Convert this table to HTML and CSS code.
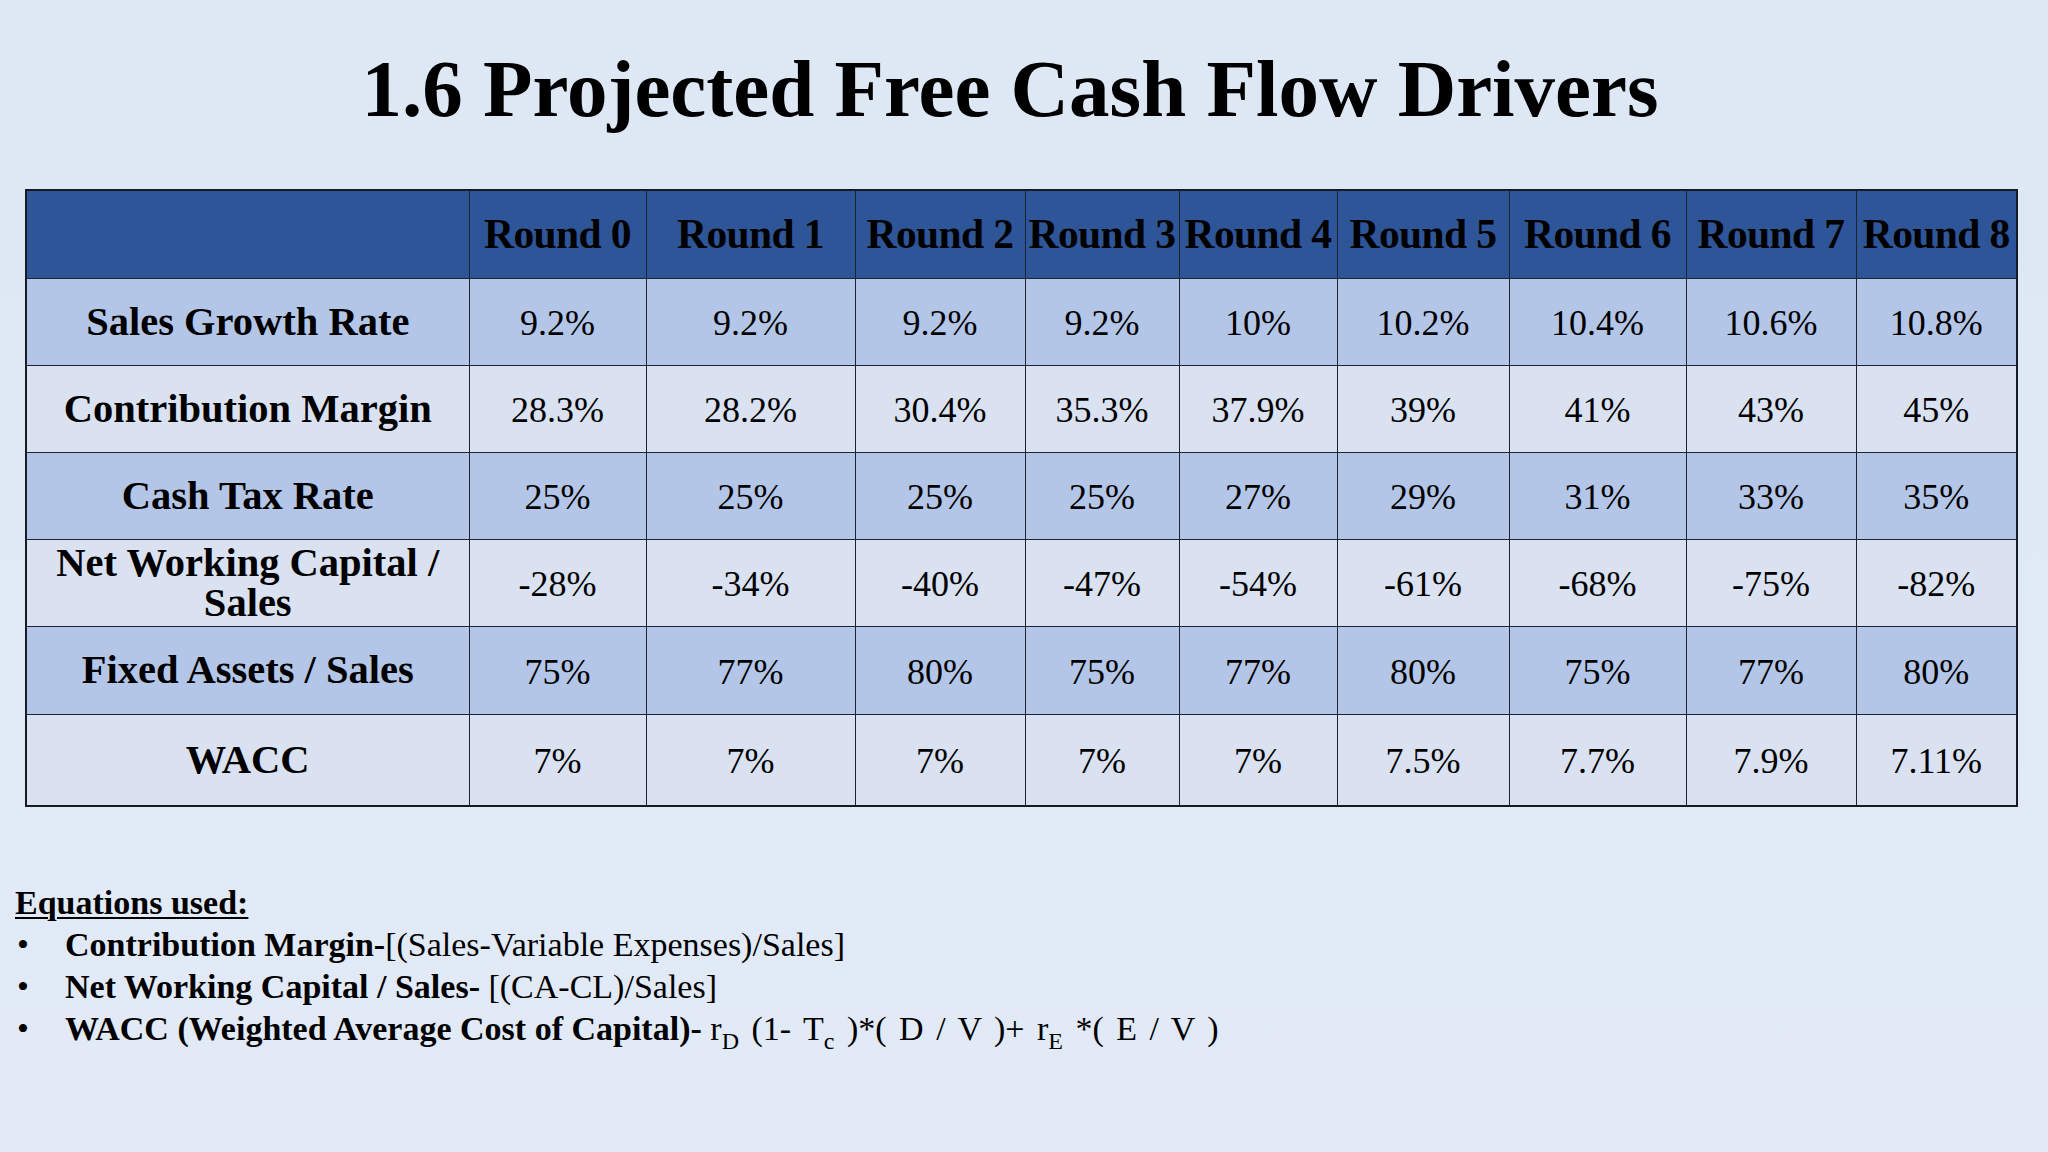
FILE: index.html
```html
<!DOCTYPE html>
<html lang="en">
<head>
<meta charset="utf-8">
<title>1.6 Projected Free Cash Flow Drivers</title>
<link rel="stylesheet" href="styles.css">
</head>
<body>
<div class="slide">
  <h1 class="title">1.6 Projected Free Cash Flow Drivers</h1>
  <table class="drivers">
    <colgroup>
      <col class="c-label">
      <col class="c0"><col class="c1"><col class="c2"><col class="c3"><col class="c4">
      <col class="c5"><col class="c6"><col class="c7"><col class="c8">
    </colgroup>
    <thead>
      <tr class="head">
        <th></th>
        <th>Round 0</th><th>Round 1</th><th>Round 2</th><th>Round 3</th><th>Round 4</th>
        <th>Round 5</th><th>Round 6</th><th>Round 7</th><th>Round 8</th>
      </tr>
    </thead>
    <tbody>
      <tr class="odd r1">
        <th>Sales Growth Rate</th>
        <td>9.2%</td><td>9.2%</td><td>9.2%</td><td>9.2%</td><td>10%</td><td>10.2%</td><td>10.4%</td><td>10.6%</td><td>10.8%</td>
      </tr>
      <tr class="even r2">
        <th>Contribution Margin</th>
        <td>28.3%</td><td>28.2%</td><td>30.4%</td><td>35.3%</td><td>37.9%</td><td>39%</td><td>41%</td><td>43%</td><td>45%</td>
      </tr>
      <tr class="odd r3">
        <th>Cash Tax Rate</th>
        <td>25%</td><td>25%</td><td>25%</td><td>25%</td><td>27%</td><td>29%</td><td>31%</td><td>33%</td><td>35%</td>
      </tr>
      <tr class="even r4">
        <th>Net Working Capital / Sales</th>
        <td>-28%</td><td>-34%</td><td>-40%</td><td>-47%</td><td>-54%</td><td>-61%</td><td>-68%</td><td>-75%</td><td>-82%</td>
      </tr>
      <tr class="odd r5">
        <th>Fixed Assets / Sales</th>
        <td>75%</td><td>77%</td><td>80%</td><td>75%</td><td>77%</td><td>80%</td><td>75%</td><td>77%</td><td>80%</td>
      </tr>
      <tr class="even r6">
        <th>WACC</th>
        <td>7%</td><td>7%</td><td>7%</td><td>7%</td><td>7%</td><td>7.5%</td><td>7.7%</td><td>7.9%</td><td>7.11%</td>
      </tr>
    </tbody>
  </table>
  <div class="equations">
    <div class="eq-head">Equations used:</div>
    <ul class="eq-list">
      <li><span class="bullet">•</span><span><b>Contribution Margin-</b>[(Sales-Variable Expenses)/Sales]</span></li>
      <li><span class="bullet">•</span><span><b>Net Working Capital / Sales-</b> [(CA-CL)/Sales]</span></li>
      <li><span class="bullet">•</span><span><b>WACC (Weighted Average Cost of Capital)-</b> <span class="formula">r<sub>D</sub> (1- T<sub>c</sub> )*( D / V )+ r<sub>E</sub> *( E / V )</span></span></li>
    </ul>
  </div>
</div>
</body>
</html>
```

FILE: styles.css
```css
* { box-sizing: border-box; }

html, body {
  margin: 0;
  padding: 0;
}

body {
  width: 2048px;
  height: 1152px;
  overflow: hidden;
  background: linear-gradient(180deg, #dde8f4 0%, #e0e9f6 50%, #e2eaf7 100%);
  font-family: "Liberation Serif", "Times New Roman", serif;
  color: #000;
}

.slide {
  width: 2048px;
  height: 1152px;
  padding: 50px 32px 0 25px;
}

.title {
  margin: 0;
  height: 78px;
  font-size: 81px;
  line-height: 78px;
  font-weight: bold;
  text-align: center;
  padding-right: 21px;
  white-space: nowrap;
}

.drivers {
  margin-top: 61px;
  width: 1991px;
  border-collapse: collapse;
  table-layout: fixed;
  border: 2px solid #161b26;
}

.c-label { width: 443px; }
.c0 { width: 177px; }
.c1 { width: 209px; }
.c2 { width: 170px; }
.c3 { width: 154px; }
.c4 { width: 158px; }
.c5 { width: 172px; }
.c6 { width: 177px; }
.c7 { width: 170px; }
.c8 { width: 161px; }

.drivers th,
.drivers td {
  border: 1px solid #1c2433;
  padding: 0 4px;
  text-align: center;
  vertical-align: middle;
  line-height: 40px;
  white-space: normal;
}

.drivers th {
  font-size: 40.5px;
  font-weight: bold;
}

.drivers td {
  font-size: 36px;
  font-weight: normal;
  padding-top: 3px;
}

.head {
  height: 88px;
  background: #2e5597;
}

.head th {
  padding: 0;
  font-size: 41.5px;
  white-space: nowrap;
  letter-spacing: -0.6px;
}

.drivers tr.odd { background: #b4c6e7; }
.drivers tr.even { background: #dae1f1; }

.r1, .r2, .r3, .r4, .r6 { height: 87px; }
.r5 { height: 88px; }
.r6 { height: 92px; }

.equations {
  margin-top: 75px;
  margin-left: -10px;
  font-size: 34px;
  line-height: 42px;
}

.eq-head {
  font-weight: bold;
  text-decoration: underline;
  text-decoration-thickness: 2px;
  text-underline-offset: 3px;
}

.eq-list {
  list-style: none;
  margin: 0;
  padding: 0;
}

.eq-list li {
  display: flex;
  white-space: nowrap;
}

.bullet {
  width: 50px;
  padding-left: 2px;
  flex: none;
}

.formula {
  word-spacing: 4px;
}

.formula sub {
  font-size: 24px;
  line-height: 0;
  vertical-align: -9px;
}
```
